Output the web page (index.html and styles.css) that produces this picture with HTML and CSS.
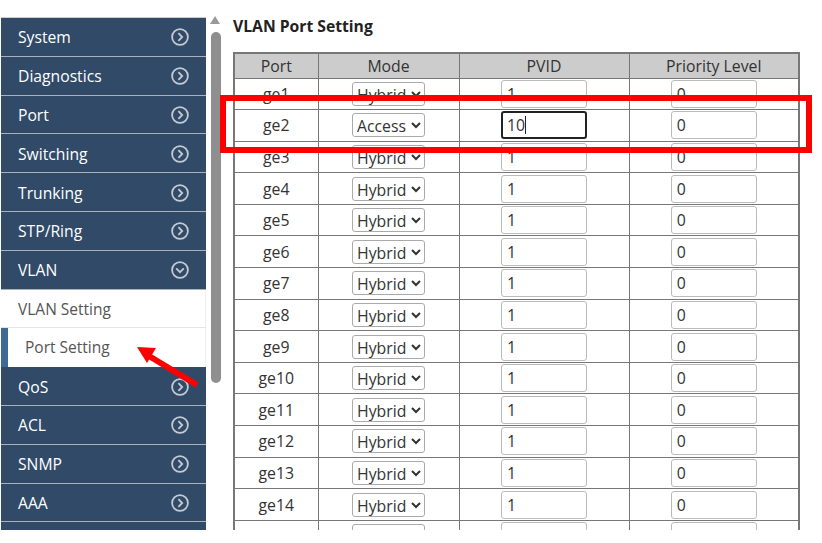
FILE: index.html
```html
<!doctype html>
<html lang="en">
<head>
    <meta charset="UTF-8">
    <title>VLAN Port Setting</title>
    <link rel="stylesheet" href="styles.css">
</head>
<body>
<svg width="0" height="0" class="defs">
    <symbol id="right" viewBox="0 0 18 18"><circle cx="9" cy="9" r="7.9" fill="none" stroke="currentColor" stroke-width="1.8"/><path d="M7.4 5.2L11.2 9L7.4 12.8" fill="none" stroke="currentColor" stroke-width="1.8"/></symbol>
    <symbol id="down" viewBox="0 0 18 18"><circle cx="9" cy="9" r="7.9" fill="none" stroke="currentColor" stroke-width="1.8"/><path d="M5.2 7.4L9 11.2L12.8 7.4" fill="none" stroke="currentColor" stroke-width="1.8"/></symbol>
</svg>
<div class="page">
    <div class="menu">
        <div class="item">System<svg class="ico"><use href="#right"/></svg></div>
        <div class="item">Diagnostics<svg class="ico"><use href="#right"/></svg></div>
        <div class="item">Port<svg class="ico"><use href="#right"/></svg></div>
        <div class="item">Switching<svg class="ico"><use href="#right"/></svg></div>
        <div class="item">Trunking<svg class="ico"><use href="#right"/></svg></div>
        <div class="item">STP/Ring<svg class="ico"><use href="#right"/></svg></div>
        <div class="item">VLAN<svg class="ico"><use href="#down"/></svg></div>
        <div class="sub">VLAN Setting</div>
        <div class="sub current">Port Setting</div>
        <div class="item">QoS<svg class="ico"><use href="#right"/></svg></div>
        <div class="item">ACL<svg class="ico"><use href="#right"/></svg></div>
        <div class="item">SNMP<svg class="ico"><use href="#right"/></svg></div>
        <div class="item">AAA<svg class="ico"><use href="#right"/></svg></div>
        <div class="item"></div>
    </div>
    <div class="scrollbar">
        <div class="arrowUp"></div>
        <div class="thumb"></div>
    </div>
    <div class="content">
        <h1>VLAN Port Setting</h1>
        <table>
            <colgroup><col class="c1"><col class="c2"><col class="c3"><col class="c4"></colgroup>
            <tr><th>Port</th><th>Mode</th><th>PVID</th><th>Priority Level</th></tr>
            <tr><td>ge1</td><td><select><option>Hybrid</option></select></td><td><input value="1"></td><td><input class="prio" value="0"></td></tr>
            <tr><td>ge2</td><td><select><option>Access</option></select></td><td><input class="focus" value="10"></td><td><input class="prio" value="0"></td></tr>
            <tr><td>ge3</td><td><select><option>Hybrid</option></select></td><td><input value="1"></td><td><input class="prio" value="0"></td></tr>
            <tr><td>ge4</td><td><select><option>Hybrid</option></select></td><td><input value="1"></td><td><input class="prio" value="0"></td></tr>
            <tr><td>ge5</td><td><select><option>Hybrid</option></select></td><td><input value="1"></td><td><input class="prio" value="0"></td></tr>
            <tr><td>ge6</td><td><select><option>Hybrid</option></select></td><td><input value="1"></td><td><input class="prio" value="0"></td></tr>
            <tr><td>ge7</td><td><select><option>Hybrid</option></select></td><td><input value="1"></td><td><input class="prio" value="0"></td></tr>
            <tr><td>ge8</td><td><select><option>Hybrid</option></select></td><td><input value="1"></td><td><input class="prio" value="0"></td></tr>
            <tr><td>ge9</td><td><select><option>Hybrid</option></select></td><td><input value="1"></td><td><input class="prio" value="0"></td></tr>
            <tr><td>ge10</td><td><select><option>Hybrid</option></select></td><td><input value="1"></td><td><input class="prio" value="0"></td></tr>
            <tr><td>ge11</td><td><select><option>Hybrid</option></select></td><td><input value="1"></td><td><input class="prio" value="0"></td></tr>
            <tr><td>ge12</td><td><select><option>Hybrid</option></select></td><td><input value="1"></td><td><input class="prio" value="0"></td></tr>
            <tr><td>ge13</td><td><select><option>Hybrid</option></select></td><td><input value="1"></td><td><input class="prio" value="0"></td></tr>
            <tr><td>ge14</td><td><select><option>Hybrid</option></select></td><td><input value="1"></td><td><input class="prio" value="0"></td></tr>
            <tr><td></td><td><select><option>Hybrid</option></select></td><td><input value="1"></td><td><input class="prio" value="0"></td></tr>
        </table>
    </div>
</div>
<!-- annotations on top of the screenshot -->
<div class="redBox"></div>
<svg class="redArrow" width="80" height="50" viewBox="0 0 80 50">
    <path d="M60 38L12 9" stroke="#f00" stroke-width="6" fill="none"/>
    <path d="M0 0L19 1L10 16Z" fill="#f00"/>
</svg>
</body>
</html>
```

FILE: styles.css
```css
* {
    margin: 0;
    padding: 0;
    box-sizing: border-box;
}

html, body {
    overflow: hidden;
    height: 100%;
    background: #fff;
}

body {
    position: relative;
    font-family: "Open Sans", "Noto Sans", sans-serif;
    color: #333;
}

.defs {
    position: absolute;
}

.page {
    display: flex;
    height: 530px;
    overflow: hidden;
}

.menu {
    width: 205px;
    margin: 17px 0 0 1px;
    flex-shrink: 0;
    border-top: 1px solid #ccc;
}

.item {
    display: flex;
    align-items: center;
    justify-content: space-between;
    height: 38.8px;
    padding: 1px 17px 0;
    font-size: 15.7px;
    color: #fff;
    background: #304a68;
    border-bottom: 1.5px solid #a9b2bc;
}

.ico {
    width: 18px;
    height: 18px;
    color: #c3cad2;
}

.sub {
    height: 38.8px;
    line-height: 39px;
    padding-left: 17px;
    font-size: 15.5px;
    color: #555;
    background: #fff;
    border-bottom: 1px solid #e4e4e4;
    border-right: 1px solid #eee;
}

.sub.current {
    padding-left: 17px;
    border-left: 7px solid #3f6a94;
    border-bottom: 0;
}

.scrollbar {
    width: 27px;
    flex-shrink: 0;
    padding: 16px 0 0 4px;
}

.arrowUp {
    width: 0;
    border-left: 5.500px solid transparent;
    border-right: 5.500px solid transparent;
    border-bottom: 8px solid #999;
}

.thumb {
    width: 10px;
    height: 351px;
    margin: 8px 0 0 1px;
    background: #8f8f8f;
    border-radius: 5px;
}

.content {
    flex: 1;
    padding-top: 16px;
}

h1 {
    font-size: 15.7px;
    line-height: 21px;
    font-weight: 700;
    color: #222;
    margin-bottom: 15px;
}

table {
    width: 565px;
    table-layout: fixed;
    border-collapse: collapse;
    border: 2px solid #777;
}

.c1 { width: 84px; }
.c2 { width: 141px; }
.c3 { width: 170px; }
.c4 { width: 170px; }

th {
    height: 25px;
    font-size: 15.8px;
    font-weight: 400;
    color: #333;
    background: #ccc;
    border: 1px solid #777;
}

td {
    height: 31.6px;
    padding: 0;
    font-size: 15.8px;
    text-align: center;
    color: #333;
    border: 1px solid #777;
    overflow: hidden;
}

td select {
    display: block;
    width: 73px;
    height: 24px;
    margin: 0 auto;
    padding-left: 0;
    font-family: inherit;
    font-size: 15.8px;
    color: #333;
    background: #fff;
    border: 1px solid #aaa;
    border-radius: 3px;
}

td input {
    display: block;
    width: 86px;
    height: 28px;
    margin: 0 auto;
    padding: 0 4px 0 5px;
    font-family: inherit;
    font-size: 15.8px;
    color: #333;
    background: #fff;
    border: 1px solid #bbb;
    border-radius: 3px;
}

td input.focus {
    border: 2px solid #222;
    padding-left: 4px;
    background: linear-gradient(#222, #222) 22px 3px / 1px 18px no-repeat #fff;
}

.redBox {
    position: absolute;
    left: 220px;
    top: 95px;
    width: 592px;
    height: 58px;
    border: 6px solid #f00;
}

.redArrow {
    position: absolute;
    left: 137px;
    top: 347px;
}
```
